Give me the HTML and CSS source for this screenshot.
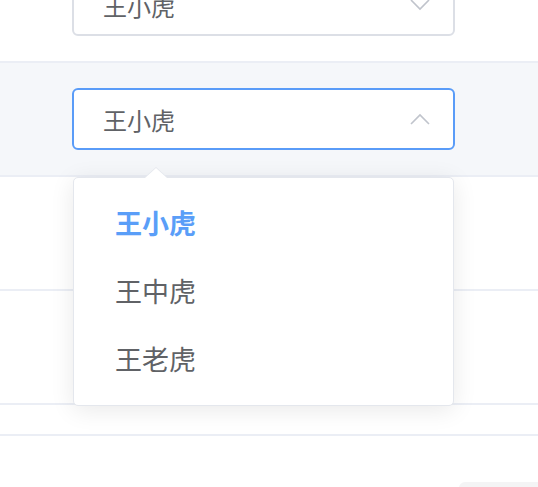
FILE: index.html
```html
<!DOCTYPE html>
<html lang="zh">
<head>
  <meta charset="UTF-8" />
  <meta name="viewport" content="width=device-width, initial-scale=1" />
  <title>选择器</title>
  <link rel="stylesheet" href="styles.css">
</head>
<body>

  <div class="table">
    <div class="row">
      <div class="select">
        <span class="select-value">王小虎</span>
        <svg class="arrow" width="20" height="12" viewBox="0 0 20 12"><path d="M1 1 L10 10 L19 1" fill="none" stroke="#c0c4cc" stroke-width="1.6"/></svg>
      </div>
    </div>

    <div class="row row-hover">
      <div class="select is-focus">
        <span class="select-value">王小虎</span>
        <svg class="arrow" width="20" height="12" viewBox="0 0 20 12"><path d="M1 11 L10 2 L19 11" fill="none" stroke="#c0c4cc" stroke-width="1.6"/></svg>

        <!-- menu desplegable -->
        <div class="dropdown">
          <div class="popper-arrow"></div>
          <ul>
            <li class="selected">王小虎</li>
            <li>王中虎</li>
            <li>王老虎</li>
          </ul>
        </div>
      </div>
    </div>

    <div class="row"></div>
    <div class="row"></div>
    <div class="row row-small"></div>
  </div>

  <div class="footer">
    <p class="footer-text">共 4 条数据，每页显示 10 条，当前为第 1 页，共 1 页</p>
    <div class="footer-box"></div>
  </div>

</body>
</html>
```

FILE: styles.css
```css
* {
  margin: 0;
  padding: 0;
  box-sizing: border-box;
}

body {
  font-family: "Noto Sans CJK SC", "Noto Sans", sans-serif;
  background: #fff;
  color: #606266;
  overflow: hidden;
  height: 487px;
}

.table {
  margin-top: -51px;
}

.row {
  height: 114px;
  border-bottom: 2px solid #ebeef5;
  display: flex;
  align-items: center;
  padding-left: 72px;
}

.row-hover {
  background: #f5f7fa;
}

.row-small {
  height: 31px;
}

.select {
  position: relative;
  width: 383px;
  height: 62px;
  border: 2px solid #dcdfe6;
  border-radius: 6px;
  background: #fff;
  display: flex;
  align-items: center;
  padding-left: 29px;
}

.select.is-focus {
  border-color: #5a9cf8;
}

.select-value {
  font-size: 24px;
  color: #606266;
  flex: 1;
}

.arrow {
  margin-right: 23px;
}

.dropdown {
  position: absolute;
  top: 87px;
  left: -1px;
  width: 381px;
  background: #fff;
  border: 1px solid #e4e7ed;
  border-radius: 5px;
  box-shadow: 0 4px 24px rgba(0, 0, 0, 0.09);
  z-index: 10;
}

.popper-arrow {
  position: absolute;
  top: -11px;
  left: 70px;
  width: 0;
  height: 0;
  border-left: 12px solid transparent;
  border-right: 12px solid transparent;
  border-bottom: 11px solid #e4e7ed;
}

.popper-arrow::after {
  content: '';
  position: absolute;
  top: 1px;
  left: -11px;
  border-left: 11px solid transparent;
  border-right: 11px solid transparent;
  border-bottom: 10px solid #fff;
}

.dropdown ul {
  list-style: none;
  padding: 11px 0 12px;
}

.dropdown li {
  height: 68px;
  line-height: 68px;
  padding-left: 41px;
  font-size: 27px;
  color: #606266;
}

.dropdown li.selected {
  color: #5a9ef8;
  font-weight: bold;
}

.footer {
  position: relative;
  padding: 48px 0 0 40px;
}

.footer-text {
  font-size: 24px;
  color: #c0c4cc;
}

.footer-box {
  position: absolute;
  top: 46px;
  left: 459px;
  width: 100px;
  height: 40px;
  border-radius: 6px;
  background: #f4f4f5;
}
```
